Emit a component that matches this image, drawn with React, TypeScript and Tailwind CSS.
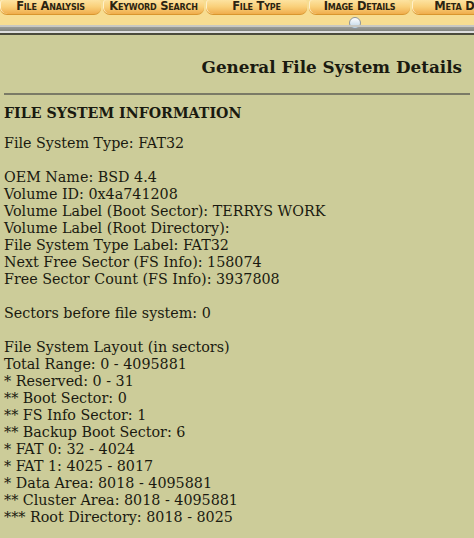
const tabs = ['File Analysis', 'Keyword Search', 'File Type', 'Image Details', 'Meta Data']

const lines = [
  'OEM Name: BSD 4.4',
  'Volume ID: 0x4a741208',
  'Volume Label (Boot Sector): TERRYS WORK',
  'Volume Label (Root Directory):',
  'File System Type Label: FAT32',
  'Next Free Sector (FS Info): 158074',
  'Free Sector Count (FS Info): 3937808',
  '',
  'Sectors before file system: 0',
  '',
  'File System Layout (in sectors)',
  'Total Range: 0 - 4095881',
  '* Reserved: 0 - 31',
  '** Boot Sector: 0',
  '** FS Info Sector: 1',
  '** Backup Boot Sector: 6',
  '* FAT 0: 32 - 4024',
  '* FAT 1: 4025 - 8017',
  '* Data Area: 8018 - 4095881',
  '** Cluster Area: 8018 - 4095881',
  '*** Root Directory: 8018 - 8025',
]

function Tab({ label }: { label: string }) {
  return (
    <div className="flex h-[15px] w-[101px] shrink-0 items-center justify-center rounded-b-[7px] rounded-t-[3px] border-b border-[#d9962e] bg-gradient-to-b from-[#fde3a0] via-[#f9cf78] to-[#efad4c] shadow-[inset_1px_0_0_#fff0c8]">
      <span className="whitespace-nowrap font-['DejaVu_Sans',sans-serif] text-[11.5px] font-bold leading-none tracking-[-0.2px] text-[#2b2412] [font-variant:small-caps]">
        {label}
      </span>
    </div>
  )
}

export default function App() {
  return (
    <div className="h-[538px] w-[474px] overflow-hidden bg-[#cccc99]">
      {/* nav frame */}
      <div className="bg-[#f7dd92]">
        <div className="flex gap-[2px] overflow-hidden">
          {tabs.map((t) => (
            <Tab key={t} label={t} />
          ))}
        </div>
        <div className="relative h-[10px]">
          <div className="absolute left-[349px] top-[2px] h-[12px] w-[12px] rounded-full border border-[#8c959c] bg-gradient-to-b from-[#ffffff] to-[#b9d2e4]" />
        </div>
      </div>
      <div className="relative h-[2px] bg-[#c8c8c2]" />
      <div className="h-[4px] bg-gradient-to-b from-[#9a9c98] to-[#83857f]" />
      <div className="h-[2px] bg-[#dedede]" />
      <div className="h-[2px] bg-[#4b4b3c]" />

      {/* content frame */}
      <div className="px-[4px] font-['DejaVu_Serif',serif] text-[#1a1a10]">
        <div className="flex justify-end pr-[8px] pt-[22px]">
          <h1 className="text-[16.8px] font-bold leading-[20px]">General File System Details</h1>
        </div>
        <hr className="mt-[16px] border-t-2 border-b-0 border-t-[#7a7a66]" />
        <h2 className="mt-[9px] text-[14.2px] font-bold leading-[18px]">FILE SYSTEM INFORMATION</h2>
        <div className="mt-[13px] text-[14.3px] leading-[17px]">
          <div>File System Type: FAT32</div>
          <div className="h-[17px]" />
          {lines.map((l, i) => (
            <div key={i} className="h-[17px] whitespace-nowrap">
              {l}
            </div>
          ))}
        </div>
      </div>
    </div>
  )
}
